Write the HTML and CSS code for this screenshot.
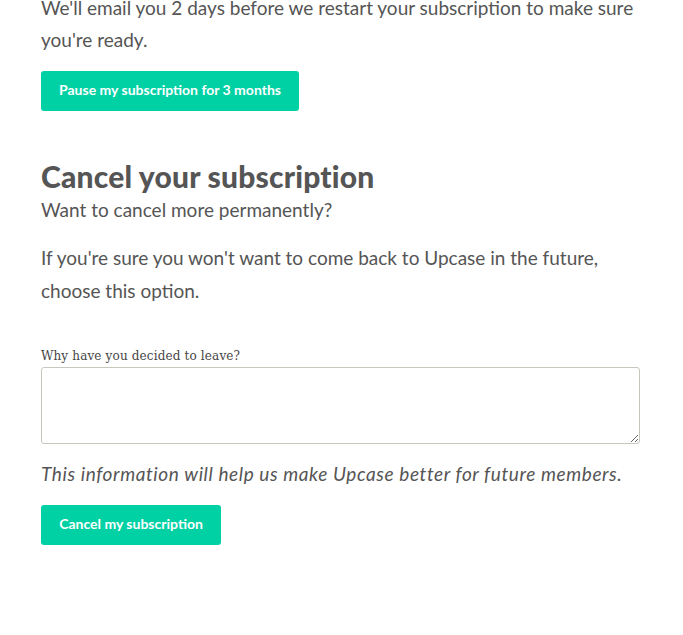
FILE: index.html
```html
<!DOCTYPE html>
<html>
<head>
<meta charset="utf-8">
<link rel="stylesheet" href="styles.css">
</head>
<body>
<main class="page">
  <p class="text">We'll email you 2 days before we restart your subscription to make sure you're ready.</p>
  <button class="btn btn-pause">Pause my subscription for 3 months</button>

  <h2 class="heading">Cancel your subscription</h2>
  <p class="sub">Want to cancel more permanently?</p>
  <p class="text text-long">If you're sure you won't want to come back to Upcase in the future, choose this option.</p>

  <form class="form">
    <label class="label" for="reason">Why have you decided to leave?</label>
    <textarea id="reason" class="textarea"></textarea>
    <p class="note">This information will help us make Upcase better for future members.</p>
    <button type="button" class="btn btn-cancel">Cancel my subscription</button>
  </form>
</main>
</body>
</html>
```
FILE: styles.css
```css
html, body {
  margin: 0;
  padding: 0;
  background: #fff;
}
body {
  font-family: "Lato", "Open Sans", sans-serif;
  color: #555;
}
.page {
  width: 599px;
  margin: -8px 0 0 41px;
}
.text {
  font-size: 19px;
  line-height: 32px;
  margin: 0 0 15px;
}
.text-long {
  width: 580px;
  line-height: 33px;
}
.btn {
  display: block;
  border: 0;
  border-radius: 3px;
  background: #00d1a5;
  color: #fff;
  font-family: "Lato", "Open Sans", sans-serif;
  font-weight: 700;
  font-size: 14px;
  height: 40px;
  padding: 0 0 3px;
  text-align: center;
  cursor: pointer;
}
.btn-pause { width: 258px; }
.btn-cancel { width: 180px; }
.heading {
  font-size: 30px;
  font-weight: 900;
  line-height: 32px;
  letter-spacing: 0.2px;
  margin: 49px 0 0;
  color: #555;
}
.sub {
  font-size: 19px;
  line-height: 24px;
  margin: 6px 0 19px;
}
.form {
  margin-top: 41px;
}
.label {
  display: block;
  font-family: "DejaVu Serif", "Liberation Serif", serif;
  font-size: 12px;
  line-height: 16px;
  letter-spacing: 0.15px;
  margin-bottom: 3px;
  color: #444;
}
.textarea {
  display: block;
  box-sizing: border-box;
  width: 599px;
  height: 77px;
  border: 1px solid #c9c6c0;
  border-radius: 3px;
  margin: 0;
  resize: vertical;
}
.note {
  font-size: 19px;
  font-style: italic;
  line-height: 32px;
  letter-spacing: 0.6px;
  margin: 14px 0 15px;
}
```
